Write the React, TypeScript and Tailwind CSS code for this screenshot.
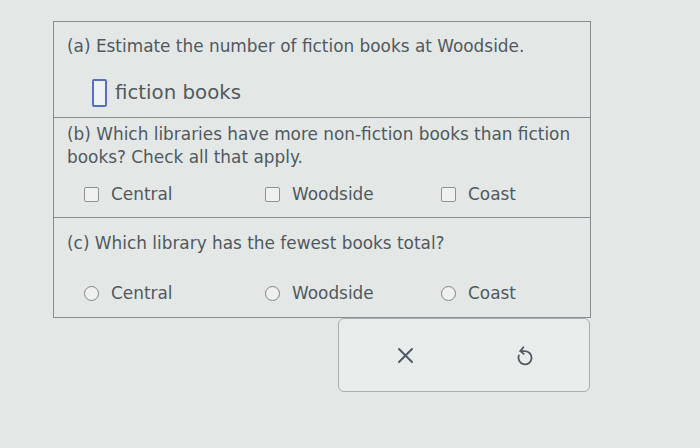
import React from "react";

const font = { fontFamily: '"DejaVu Sans", Verdana, sans-serif' };

function Check() {
  return <span className="inline-block w-[15px] h-[15px] border-[1.5px] border-[#8c9396] rounded-[2px] bg-[#eef1f0]" />;
}
function Radio() {
  return <span className="inline-block w-[15px] h-[15px] border-[1.5px] border-[#7e868a] rounded-full bg-[#eef1f0]" />;
}

function Option({ kind, label, w }: { kind: "c" | "r"; label: string; w: string }) {
  return (
    <div className={`flex items-center gap-[12px] ${w}`}>
      {kind === "c" ? <Check /> : <Radio />}
      <span>{label}</span>
    </div>
  );
}

export default function App() {
  return (
    <div className="w-[700px] h-[448px] bg-[#e3e8e7] pl-[53px] pt-[21px] text-[#51595e] text-[16.9px]" style={font}>
      <div className="w-[538px] border border-[#868d90] flex flex-col">
        <div className="h-[96px] border-b border-[#868d90] pl-[13px] pt-[12px]">
          <div className="leading-[24px]">(a) Estimate the number of fiction books at Woodside.</div>
          <div className="flex items-center mt-[20px] pl-[25px] gap-[8px]">
            <span className="inline-block w-[15px] h-[28px] border-[2px] border-[#5c6fbe] rounded-[2px] bg-[#eef1f3]" />
            <span className="text-[19.8px]">fiction books</span>
          </div>
        </div>
        <div className="h-[100px] border-b border-[#868d90] pl-[13px] pt-[5px]">
          <div className="leading-[23px]">
            (b) Which libraries have more non-fiction books than fiction
            <br />
            books? Check all that apply.
          </div>
          <div className="flex items-center pl-[17px] mt-[13px]">
            <Option kind="c" label="Central" w="w-[181px]" />
            <Option kind="c" label="Woodside" w="w-[176px]" />
            <Option kind="c" label="Coast" w="w-[100px]" />
          </div>
        </div>
        <div className="h-[99px] pl-[13px] pt-[13px]">
          <div className="leading-[24px]">(c) Which library has the fewest books total?</div>
          <div className="flex items-center pl-[17px] mt-[26px]">
            <Option kind="r" label="Central" w="w-[181px]" />
            <Option kind="r" label="Woodside" w="w-[176px]" />
            <Option kind="r" label="Coast" w="w-[100px]" />
          </div>
        </div>
      </div>
      <div className="ml-[285px] w-[252px] h-[74px] border-[1.5px] border-[#a9b0b2] rounded-[6px] bg-[#e8eceb] flex items-center">
        <div className="w-[126px] flex justify-center pl-[8px]">
          <svg width="17" height="17" viewBox="0 0 17 17" fill="none" stroke="#4f5b61" strokeWidth="2" strokeLinecap="round">
            <path d="M2 2 L15 15 M15 2 L2 15" />
          </svg>
        </div>
        <div className="w-[126px] flex justify-center pr-[4px]">
          <svg width="18" height="22" viewBox="0 0 16 20" fill="none" stroke="#4f5b61" strokeWidth="1.7" strokeLinecap="round" strokeLinejoin="round">
            <path d="M6.5 3 L3.8 6.5 L6.8 9" />
            <path d="M3.8 6.5 H8 A6 6 0 1 1 2.36 10.45" />
          </svg>
        </div>
      </div>
    </div>
  );
}
